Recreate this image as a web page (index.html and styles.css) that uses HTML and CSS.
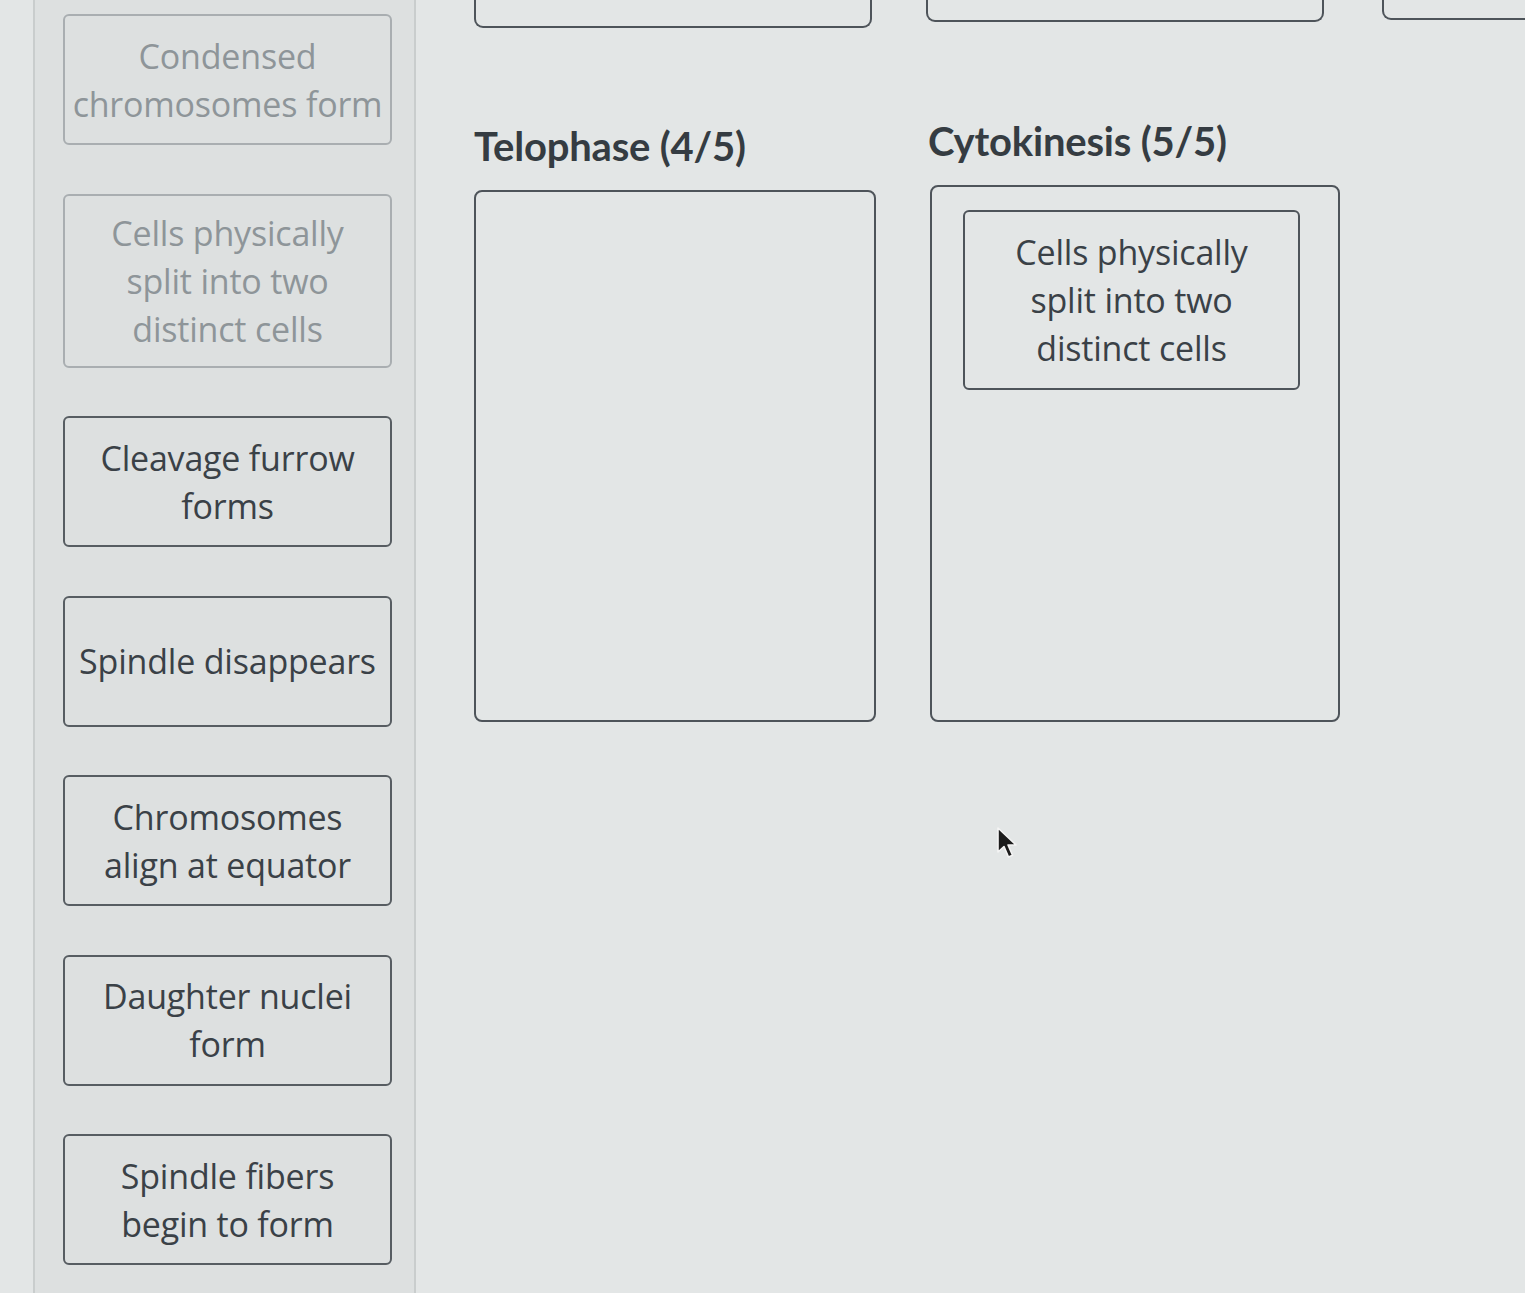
FILE: index.html
```html
<!DOCTYPE html>
<html lang="en">
<head>
<meta charset="utf-8">
<title>Mitosis sorting</title>
<link rel="stylesheet" href="styles.css">
</head>
<body>
<div class="page">
  <aside class="bank">
    <div class="card faded">Condensed<br>chromosomes form</div>
    <div class="card faded">Cells physically<br>split into two<br>distinct cells</div>
    <div class="card">Cleavage furrow<br>forms</div>
    <div class="card">Spindle disappears</div>
    <div class="card">Chromosomes<br>align at equator</div>
    <div class="card">Daughter nuclei<br>form</div>
    <div class="card">Spindle fibers<br>begin to form</div>
  </aside>
  <main class="zones">
    <div class="stub"></div>
    <div class="stub stub-b"></div>
    <div class="stub stub-c"></div>
    <section class="zone">
      <h2 class="zone-title">Telophase (4/5)</h2>
      <div class="drop"></div>
    </section>
    <section class="zone zone-wide">
      <h2 class="zone-title">Cytokinesis (5/5)</h2>
      <div class="drop drop-filled">
        <div class="card card-placed">Cells physically<br>split into two<br>distinct cells</div>
      </div>
    </section>
  </main>
</div>
<svg class="cursor" width="24" height="34" viewBox="0 0 24 34" aria-hidden="true">
  <path d="M2 2 L2 26 L8 20.5 L12.5 31 L16.5 29.3 L12 19 L20 19 Z" fill="#1c1c1c" stroke="#f4f4f4" stroke-width="1.6" stroke-linejoin="round"/>
</svg>
</body>
</html>
```
FILE: styles.css
```css
html, body {
  margin: 0;
  padding: 0;
  height: 100%;
  overflow: hidden;
  background: #e3e6e6;
  font-family: "Open Sans", Lato, "Liberation Sans", sans-serif;
  color: #3b4248;
}

.page {
  display: flex;
  align-items: flex-start;
  height: 100%;
}

.bank {
  flex: none;
  width: 383px;
  height: 100%;
  margin-left: 33px;
  box-sizing: border-box;
  padding: 14px 22px 0 28px;
  background: #dde0e0;
  border-left: 2px solid #c9cdcd;
  border-right: 2px solid #c9cdcd;
  display: flex;
  flex-direction: column;
  gap: 48.5px;
}

.card {
  box-sizing: border-box;
  min-height: 131px;
  padding: 13px 4px;
  border: 2px solid #575d62;
  border-radius: 6px;
  display: flex;
  align-items: center;
  justify-content: center;
  text-align: center;
  font-size: 34px;
  line-height: 48px;
  letter-spacing: -0.2px;
  white-space: nowrap;
  color: #3a4147;
}

.card.faded {
  border-color: #a9aeb1;
  color: #8e9599;
}

.zones {
  flex: none;
  display: grid;
  grid-template-columns: 402px 410px 402px;
  column-gap: 52px;
  padding-left: 58px;
  align-items: start;
}

.stub {
  height: 26px;
  border: 2px solid #4e545a;
  border-top: 0;
  border-radius: 0 0 9px 9px;
  width: 394px;
}

.stub-b {
  height: 20px;
  margin-left: -2px;
}

.stub-c {
  height: 18px;
  margin-left: -8px;
}

.zone-title {
  margin: 94px 0 0;
  font-family: Lato, "Open Sans", sans-serif;
  font-size: 40px;
  font-weight: 700;
  line-height: 48px;
  color: #353c42;
  letter-spacing: -0.2px;
}

.zone-wide .zone-title {
  margin-top: 89px;
}

.drop {
  box-sizing: border-box;
  margin-top: 20px;
  height: 532px;
  width: 402px;
  border: 2px solid #4e545a;
  border-radius: 8px;
}

.zone-wide .drop {
  width: 410px;
  margin-top: 20px;
  margin-left: 2px;
  height: 537px;
}

.drop-filled {
  padding: 23px 38px 0 31px;
}

.card-placed {
  min-height: 0;
  height: 180px;
  border-color: #4e545a;
  color: #3a4147;
}

.cursor {
  position: absolute;
  left: 996px;
  top: 826px;
}
```
